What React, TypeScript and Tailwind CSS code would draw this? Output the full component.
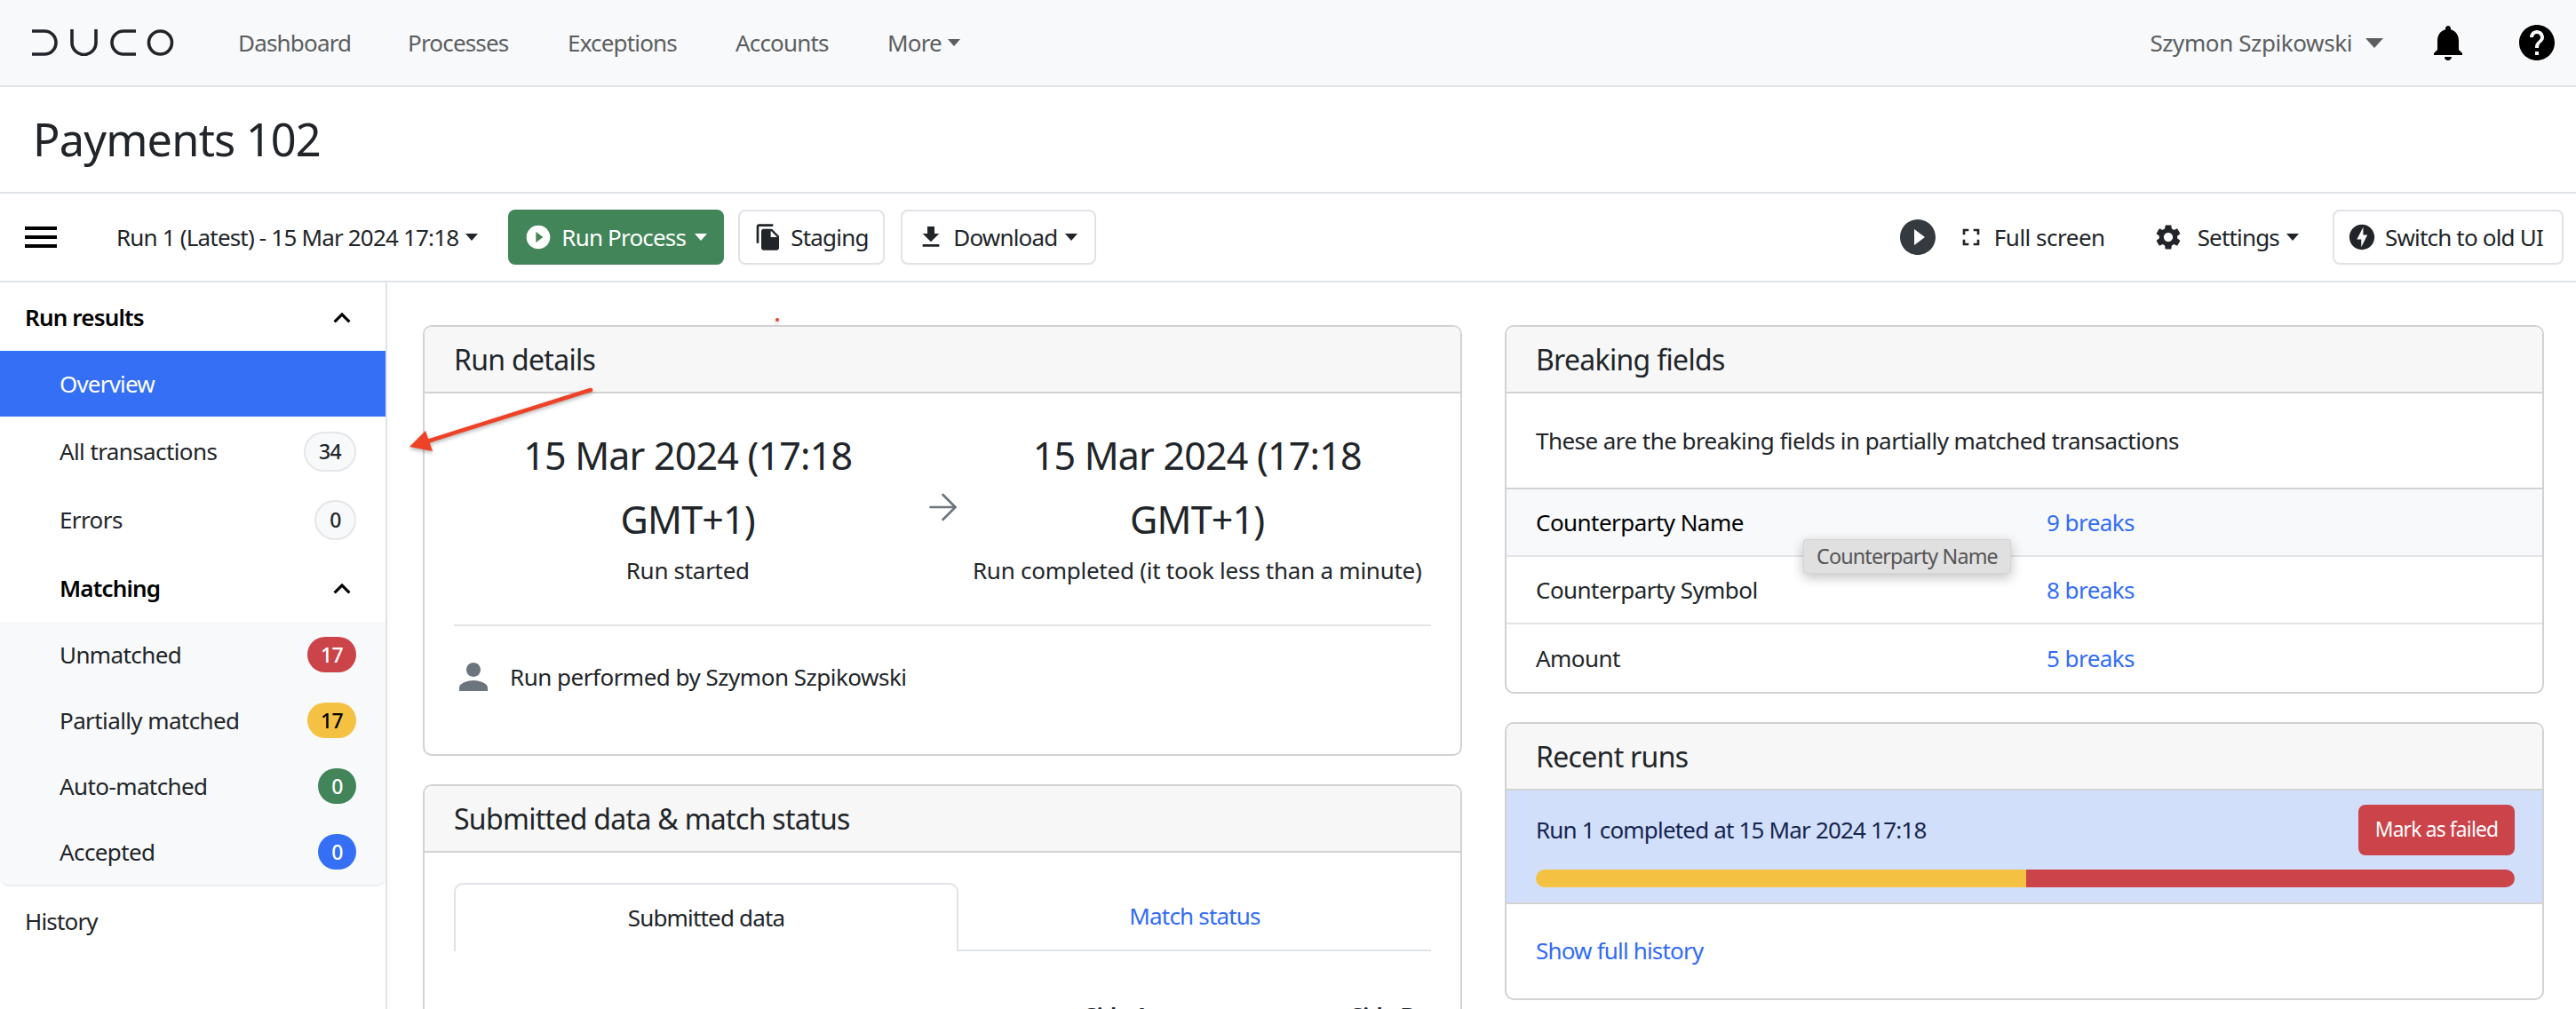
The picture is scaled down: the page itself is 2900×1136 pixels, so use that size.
import React from "react";
import { ArrowRight } from "lucide-react";
import {
  MdMenu, MdPlayCircleFilled, MdFileCopy, MdFileDownload, MdFullscreen, MdSettings,
  MdOfflineBolt, MdNotifications, MdHelp, MdExpandLess, MdPerson,
} from "react-icons/md";

const Caret = ({ c = "border-t-[#212529]" }: { c?: string }) => (
  <span className={`inline-block w-0 h-0 border-x-[7px] border-x-transparent border-t-[8px] ${c}`} />
);

const Logo = () => (
  <svg width="160" height="30" viewBox="0 0 160 30" fill="none" stroke="#212529" strokeWidth="3.6" className="ml-[36px]">
    <path d="M0 2h14a13 13 0 0 1 0 26H0" />
    <path d="M45 0v15a13.5 13.5 0 0 0 27 0V0" />
    <path d="M117 2h-14a13 13 0 0 0 0 26h14" />
    <circle cx="144.5" cy="15" r="13" />
  </svg>
);

const Badge = ({ n, c }: { n: string; c: string }) => (
  <span className={`flex h-[40px] items-center justify-center rounded-full text-[23px] font-medium ${c}`}>{n}</span>
);

const SideRow = ({ label, h, badge }: { label: string; h: string; badge?: React.ReactNode }) => (
  <div className={`flex items-center justify-between pl-[67px] pr-[33px] text-[26px] tracking-[-0.6px] text-[#212529] ${h}`}>
    <span>{label}</span>
    {badge}
  </div>
);

const Card = ({ title, className, children }: { title: string; className: string; children: React.ReactNode }) => (
  <section className={`rounded-[10px] border-2 border-[#d2d2d2] ${className}`}>
    <div className="flex h-[75px] items-center rounded-t-[8px] border-b-2 border-[#d2d2d2] bg-[#f7f7f7] pl-[33px] text-[32px] tracking-[-0.7px] text-[#212529]">
      {title}
    </div>
    {children}
  </section>
);

const BreakRow = ({ name, link, className }: { name: string; link: string; className: string }) => (
  <div className={`flex h-[76px] items-center pl-[33px] pt-[1px] text-[26px] tracking-[-0.55px] ${className}`}>
    <span className="w-[575px]">{name}</span>
    <span className="text-[#316bf6]">{link}</span>
  </div>
);

export default function App() {
  return (
    <div
      className="relative h-[1136px] w-[2900px] overflow-hidden bg-white tracking-[-0.82px] text-[#212529]"
      style={{ fontFamily: '"Noto Sans", sans-serif' }}
    >
      <header className="flex h-[98px] items-center border-b-2 border-[#dfe3e7] bg-[#f8f9fa] text-[26px] text-[#5b5e61]">
        <Logo />
        <nav className="ml-[72px] flex items-center">
          <span className="w-[191px]">Dashboard</span>
          <span className="w-[180px]">Processes</span>
          <span className="w-[189px]">Exceptions</span>
          <span className="w-[171px]">Accounts</span>
          <span className="flex items-center gap-[7px]">More <Caret c="border-t-[#5b5e61]" /></span>
        </nav>
        <div className="ml-auto flex items-center">
          <span className="tracking-[-0.4px]">Szymon Szpikowski</span>
          <span className="ml-[15px] inline-block h-0 w-0 border-x-[10px] border-t-[11px] border-x-transparent border-t-[#5b5e61]" />
          <MdNotifications className="ml-[49px] text-black" size={48} />
          <MdHelp className="ml-[52px] mr-[20px] text-black" size={48} />
        </div>
      </header>

      <div className="flex h-[120px] items-center border-b-2 border-[#dfe3e7] pl-[37px] text-[50.5px]">Payments 102</div>

      <div className="flex h-[100px] items-center border-b-2 border-[#dfe3e7] text-[26px]">
        <MdMenu size={48} className="ml-[22px] text-black" />
        <span className="ml-[61px]">Run 1 (Latest) - 15 Mar 2024 17:18</span>
        <span className="ml-[8px] flex"><Caret /></span>
        <button className="ml-[34px] flex h-[62px] w-[243px] items-center gap-[10px] rounded-[8px] bg-[#418559] pl-[18px] text-white">
          <MdPlayCircleFilled size={32} />
          Run Process
          <Caret c="border-t-white" />
        </button>
        <button className="ml-[16px] flex h-[62px] w-[165px] items-center gap-[9px] rounded-[8px] border-2 border-[#dfe3e7] pl-[16px]">
          <MdFileCopy size={32} />
          Staging
        </button>
        <button className="ml-[18px] flex h-[62px] w-[220px] items-center gap-[9px] rounded-[8px] border-2 border-[#dfe3e7] pl-[16px]">
          <MdFileDownload size={32} />
          Download
          <Caret />
        </button>
        <div className="ml-auto flex items-center">
          <MdPlayCircleFilled size={48} className="text-[#343a40]" />
          <MdFullscreen size={32} className="ml-[20px]" />
          <span className="ml-[10px] tracking-[-0.5px]">Full screen</span>
          <MdSettings size={34} className="ml-[54px]" />
          <span className="ml-[16px]">Settings</span>
          <span className="ml-[8px] flex"><Caret /></span>
          <button className="ml-[38px] mr-[14px] flex h-[62px] w-[260px] items-center gap-[9px] rounded-[8px] border-2 border-[#dfe3e7] pl-[14px]">
            <MdOfflineBolt size={34} />
            Switch to old UI
          </button>
        </div>
      </div>

      <div className="flex">
        <aside className="h-[818px] w-[436px] shrink-0 border-r-2 border-[#dfe3e7]">
          <div className="flex h-[77px] items-center justify-between pl-[28px] pr-[30px] pt-[2px] text-[26px] font-semibold text-black">
            Run results <MdExpandLess size={38} />
          </div>
          <div className="flex h-[74px] items-center bg-[#356ff5] pl-[67px] text-[26px] text-white">Overview</div>
          <SideRow label="All transactions" h="h-[78px]" badge={<Badge n="34" c="w-[59px] border-2 border-[#e4e6e9] bg-[#f8f9fa] h-[45px]" />} />
          <SideRow label="Errors" h="h-[76px]" badge={<Badge n="0" c="w-[47px] border-2 border-[#e4e6e9] bg-[#f8f9fa] h-[45px]" />} />
          <div className="flex h-[77px] items-center justify-between pl-[67px] pr-[30px] pt-[2px] text-[26px] font-semibold text-black">
            Matching <MdExpandLess size={38} />
          </div>
          <div className="rounded-b-[10px] border-b-2 border-[#eceef0] bg-[#f8f9fa]">
            <SideRow label="Unmatched" h="h-[74px]" badge={<Badge n="17" c="w-[55px] bg-[#cb444a] text-white" />} />
            <SideRow label="Partially matched" h="h-[74px]" badge={<Badge n="17" c="w-[55px] bg-[#f5c142] text-black" />} />
            <SideRow label="Auto-matched" h="h-[74px]" badge={<Badge n="0" c="w-[43px] bg-[#418559] text-white" />} />
            <SideRow label="Accepted" h="h-[74px]" badge={<Badge n="0" c="w-[43px] bg-[#356ff5] text-white" />} />
          </div>
          <div className="flex h-[78px] items-center pl-[28px] text-[26px]">History</div>
        </aside>

        <main className="flex flex-1 items-start gap-[48px] pl-[40px] pt-[48px]">
          <div className="w-[1170px] shrink-0">
            <Card title="Run details" className="h-[485px]">
              <div className="mx-[33px] flex border-b-2 border-[#e2e4e8] pb-[40px] pt-[34px]">
                <div className="w-[528px] text-center">
                  <div className="mx-auto w-[400px] text-[43px] leading-[72px]">15 Mar 2024 (17:18 GMT+1)</div>
                  <div className="text-[26px] leading-[42px] tracking-[-0.3px]">Run started</div>
                </div>
                <div className="flex w-[47px] shrink-0 justify-center pt-[70px]">
                  <ArrowRight size={55} strokeWidth={1.3} className="h-[48px] shrink-0 text-[#6c757d]" />
                </div>
                <div className="w-[528px] text-center">
                  <div className="mx-auto w-[400px] text-[43px] leading-[72px]">15 Mar 2024 (17:18 GMT+1)</div>
                  <div className="whitespace-nowrap text-[26px] leading-[42px] tracking-[-0.25px]">Run completed (it took less than a minute)</div>
                </div>
              </div>
              <div className="ml-[31px] mt-[33px] flex items-center gap-[17px] text-[26px] tracking-[-0.5px]">
                <MdPerson size={48} className="text-[#6c757d]" />
                Run performed by Szymon Szpikowski
              </div>
            </Card>
            <Card title="Submitted data & match status" className="mt-[32px] h-[400px]">
              <div className="mx-[33px] mt-[34px] flex h-[77px] text-[26px]">
                <div className="flex w-[568px] items-center justify-center rounded-t-[10px] border-2 border-b-0 border-[#dfe3e7]">Submitted data</div>
                <div className="flex flex-1 items-center justify-center border-b-2 border-[#dfe3e7] text-[#316bf6]">Match status</div>
              </div>
              <div className="ml-[743px] mt-[53px] flex gap-[227px] text-[26px] font-semibold">
                <span>Side A</span>
                <span>Side B</span>
              </div>
            </Card>
          </div>

          <div className="w-[1170px] shrink-0">
            <Card title="Breaking fields" className="overflow-visible">
              <div className="flex h-[108px] items-center border-b-2 border-[#d2d2d2] pl-[33px] text-[26px] tracking-[-0.55px]">
                These are the breaking fields in partially matched transactions
              </div>
              <div className="relative">
                <BreakRow name="Counterparty Name" link="9 breaks" className="border-b-2 border-[#e2e4e8] bg-[#f8f9fa] text-black" />
                <BreakRow name="Counterparty Symbol" link="8 breaks" className="border-b-2 border-[#e2e4e8]" />
                <BreakRow name="Amount" link="5 breaks" className="" />
                <div className="absolute left-[334px] top-[56px] flex h-[39px] w-[234px] items-center justify-center rounded-[3px] border border-[#d5d5d5] bg-[#e0e0e0] text-[23.3px] text-[#555] shadow-[0_4px_14px_rgba(0,0,0,0.25)]">
                  Counterparty Name
                </div>
              </div>
            </Card>
            <Card title="Recent runs" className="mt-[32px] h-[313px]">
              <div className="h-[128px] border-b-2 border-[#d2d2d2] bg-[#d2dffa] pl-[33px] pr-[31px]">
                <div className="flex h-[73px] items-center justify-between pt-[15px]">
                  <span className="text-[26px] text-[#14254f]">Run 1 completed at 15 Mar 2024 17:18</span>
                  <button className="flex h-[57px] w-[176px] items-center justify-center rounded-[8px] bg-[#cb444a] text-[22.8px] text-white">Mark as failed</button>
                </div>
                <div className="mt-[16px] flex h-[20px] overflow-hidden rounded-full">
                  <div className="w-[552px] bg-[#f5c142]" />
                  <div className="flex-1 bg-[#cb444a]" />
                </div>
              </div>
              <div className="flex h-[105px] items-center pl-[33px] text-[26px] text-[#316bf6]">Show full history</div>
            </Card>
          </div>
        </main>
      </div>

      <svg className="pointer-events-none absolute left-[455px] top-[350px] drop-shadow-[0_2px_2px_rgba(0,0,0,0.3)]" width="430" height="170" viewBox="0 0 430 170" fill="none">
        <path d="M210 89L26 147" stroke="#ee4227" strokeWidth="4.5" strokeLinecap="round" />
        <path d="M6 153L24 135L32 158Z" fill="#ee4227" />
        <circle cx="420" cy="10" r="2" fill="#ee4227" />
      </svg>
    </div>
  );
}
